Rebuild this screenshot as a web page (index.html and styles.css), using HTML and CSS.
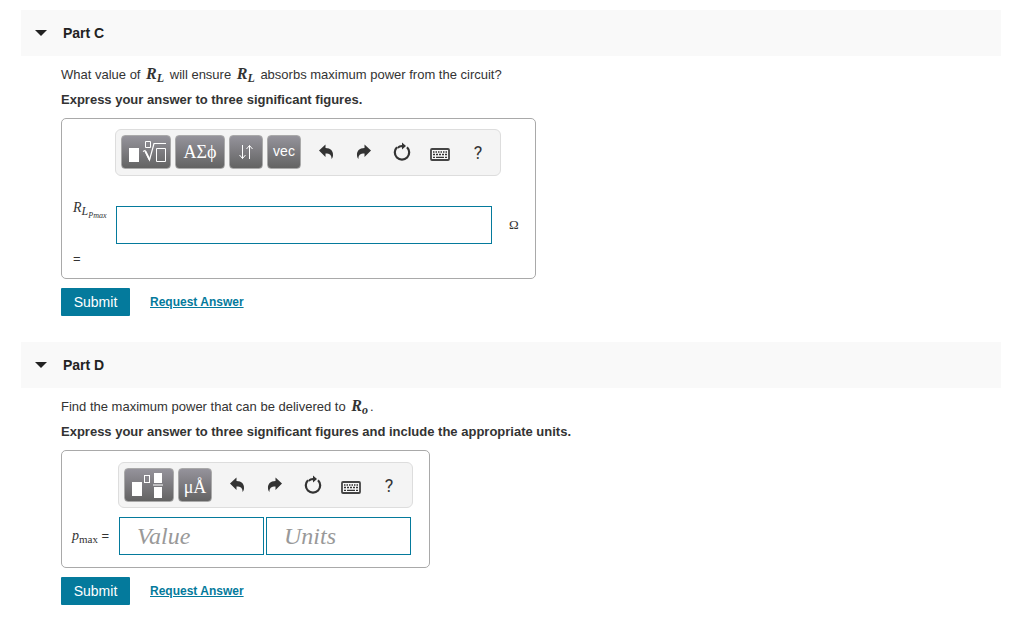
FILE: index.html
```html
<!DOCTYPE html>
<html lang="en">
<head>
  <meta charset="UTF-8" />
  <meta name="viewport" content="width=device-width, initial-scale=1.0" />
  <title>Maximum Power Transfer</title>
  <link rel="stylesheet" href="styles.css">
</head>
<body>
  <!-- Icons shared by both toolbars -->
  <svg class="sprite" aria-hidden="true">
    <symbol id="undo" viewBox="0 0 16 16">
      <path d="M1 6.500 7.500.5v3.500c5.200.2 7.900 2.900 7.500 7.500-.1 1.500-.6 2.700-1.500 3.500.2-3.700-1.500-5.500-6-5.500V13z" fill="#333"/>
    </symbol>
    <symbol id="reset" viewBox="0 0 20 20">
      <path d="M5 5.200A7.200 7.200 0 1 0 15 5.200" fill="none" stroke="#333" stroke-width="2.200"/>
      <path d="M5 5.500C6.500 3.800 8 3.200 10 3.100V.5l4 3.500-4 3.600V5.200C8.300 5.300 7.500 5.600 6.500 6.500z" fill="#333"/>
    </symbol>
    <symbol id="keyboard" viewBox="0 0 20 13">
      <rect x="1" y="1" width="18" height="11" rx="1" fill="#f8f8f8" stroke="#444" stroke-width="1.800"/>
      <path d="M3 4h14" stroke="#333" stroke-width="1.500" stroke-dasharray="1.500 1"/>
      <path d="M3 6.500h14" stroke="#333" stroke-width="1.500" stroke-dasharray="2 1"/>
      <path d="M3 9.300h2M6 9.300h8M15 9.300h2" stroke="#333" stroke-width="1.200"/>
    </symbol>
  </svg>

  <main>
    <section class="part">
      <h2 class="part-header"><span class="arrow"></span>Part C</h2>
      <div class="part-body">
        <p>What value of <span class="math"><i>R<sub>L</sub></i></span> will ensure <span class="math"><i>R<sub>L</sub></i></span> absorbs maximum power from the circuit?</p>
        <p class="instructions">Express your answer to three significant figures.</p>
        <div class="answer-box">
          <div class="toolbar">
            <div class="templates">
              <button type="button" class="wide" aria-label="Templates">
                <svg width="40" height="24" viewBox="0 0 40 24">
                  <rect x="3" y="8" width="10" height="14" fill="#fff"/>
                  <path d="M19.500 1.500h5v6h-5zM30.500 8.500h9v13h-9z" fill="none" stroke="#fff"/>
                  <path d="M17 11.500l2-1 4.500 9.500 4.500-16.500H40" fill="none" stroke="#fff" stroke-width="1.200"/>
                  <path d="M19.500 11.500l4 8" stroke="#fff" stroke-width="1.800"/>
                </svg>
              </button>
              <button type="button" class="wide greek">ΑΣϕ</button>
              <button type="button" aria-label="Arrows">
                <svg width="16" height="18" viewBox="0 0 16 18" fill="none" stroke="#fff">
                  <path d="M4.500 2v13.500M1.500 12l3 3.500 3-3.500M11.500 16V2.500M8.500 6l3-3.500 3 3.500"/>
                </svg>
              </button>
              <button type="button" class="vec">vec</button>
            </div>
            <div class="tools">
              <button type="button" aria-label="Undo"><svg width="16" height="16"><use href="#undo"/></svg></button>
              <button type="button" aria-label="Redo"><svg class="flip" width="16" height="16"><use href="#undo"/></svg></button>
              <button type="button" aria-label="Reset"><svg width="20" height="20"><use href="#reset"/></svg></button>
              <button type="button" aria-label="Keyboard shortcuts"><svg class="low" width="20" height="13"><use href="#keyboard"/></svg></button>
              <button type="button" aria-label="Help">?</button>
            </div>
          </div>
          <div class="answer-row">
            <label class="stacked" for="rl"><i>R<sub>L<sub>Pmax</sub></sub></i> <span>=</span></label>
            <div class="field">
              <input type="text" id="rl" class="long">
              <span class="unit">Ω</span>
            </div>
          </div>
        </div>
        <div class="actions">
          <button type="submit" class="submit">Submit</button>
          <a href="#">Request Answer</a>
        </div>
      </div>
    </section>

    <section class="part">
      <h2 class="part-header"><span class="arrow"></span>Part D</h2>
      <div class="part-body">
        <p>Find the maximum power that can be delivered to <span class="math"><i>R<sub>o</sub></i></span>.</p>
        <p class="instructions">Express your answer to three significant figures and include the appropriate units.</p>
        <div class="answer-box compact">
          <div class="toolbar">
            <div class="templates">
              <button type="button" class="wide" aria-label="Templates">
                <svg width="40" height="28" viewBox="0 0 40 28">
                  <rect x="3" y="11" width="10" height="14" fill="#fff"/>
                  <rect x="15.500" y="4.500" width="5" height="7" fill="none" stroke="#fff"/>
                  <path d="M25 2h8v10h-8zM25 16h8v11h-8zM24 13.500h10v1H24z" fill="#fff"/>
                </svg>
              </button>
              <button type="button" class="greek angstrom">μÅ</button>
            </div>
            <div class="tools">
              <button type="button" aria-label="Undo"><svg width="16" height="16"><use href="#undo"/></svg></button>
              <button type="button" aria-label="Redo"><svg class="flip" width="16" height="16"><use href="#undo"/></svg></button>
              <button type="button" aria-label="Reset"><svg width="20" height="20"><use href="#reset"/></svg></button>
              <button type="button" aria-label="Keyboard shortcuts"><svg class="low" width="20" height="13"><use href="#keyboard"/></svg></button>
              <button type="button" aria-label="Help">?</button>
            </div>
          </div>
          <div class="answer-row">
            <label for="value"><i>p</i><sub>max</sub> <span>=</span></label>
            <input type="text" id="value" placeholder="Value">
            <input type="text" id="units" placeholder="Units" aria-label="Units">
          </div>
        </div>
        <div class="actions">
          <button type="submit" class="submit">Submit</button>
          <a href="#">Request Answer</a>
        </div>
      </div>
    </section>
  </main>
</body>
</html>
```
FILE: styles.css
```css
* {
  box-sizing: border-box;
}
body {
  font-family: "Liberation Sans", Arial, sans-serif;
  font-size: 13px;
  line-height: 18px;
  color: #333;
  background: #fff;
  margin: 0;
}
main {
  padding: 10px 10px 0 21px;
}
.sprite {
  display: none;
}
.part {
  margin-bottom: 26px;
}
.part-header {
  display: flex;
  align-items: center;
  height: 46px;
  margin: 0;
  padding-left: 14px;
  background: #f9f9f9;
  color: #222;
  font-size: 14px;
}
.arrow {
  border: 6px solid transparent;
  border-top-color: #222;
  border-bottom: 0;
  margin-right: 16px;
}
.part-body {
  padding: 9px 0 0 40px;
}
p {
  margin: 0 0 7px;
}
.instructions {
  font-weight: bold;
  margin-bottom: 9px;
}
.math {
  font-family: "Liberation Serif", "Times New Roman", serif;
  font-size: 16px;
  font-weight: bold;
  line-height: 18px;
  margin: 0 2px;
}
sub {
  font-size: 12px;
  line-height: 0;
  vertical-align: -3px;
}
.answer-box {
  width: fit-content;
  min-height: 161px;
  padding: 10px 16px 0 11px;
  border: 1px solid #a9a9a9;
  border-radius: 5px;
}
.answer-box.compact {
  min-height: 118px;
  padding: 11px 16px 0 10px;
}
.toolbar {
  display: flex;
  gap: 6px;
  width: fit-content;
  margin-left: 42px;
  padding: 5px 3px 6px 5px;
  border: 1px solid #ddd;
  border-radius: 6px;
  background: #f4f4f4;
}
.compact .toolbar {
  margin-left: 46px;
  padding: 5px 4px 5px 5px;
}
.templates {
  display: flex;
  gap: 4px;
}
.tools {
  display: flex;
}
.toolbar button {
  display: flex;
  align-items: center;
  justify-content: center;
  height: 34px;
  padding: 0;
  border: 0;
}
.templates button {
  width: 34px;
  border: 1px solid #aaa;
  border-radius: 4px;
  background: linear-gradient(#95939b, #636363);
  color: #fff;
}
.templates .wide {
  width: 50px;
}
.templates .greek {
  font-family: "Liberation Serif", "Times New Roman", serif;
  font-size: 18px;
}
.templates .angstrom {
  padding-top: 4px;
}
.templates .vec {
  padding-bottom: 2px;
  font-family: "Liberation Sans", Arial, sans-serif;
  font-size: 14px;
}
.tools button {
  width: 38px;
  background: none;
  color: #333;
  font-family: Roboto, sans-serif;
  font-size: 18px;
}
.flip {
  transform: scaleX(-1);
}
.low {
  margin-top: 4px;
}
.answer-row {
  display: flex;
  align-items: center;
  margin-top: 23px;
}
.compact .answer-row {
  gap: 2px;
  margin-top: 9px;
}
label {
  width: 45px;
  font-family: "Liberation Serif", "Times New Roman", serif;
  font-size: 14px;
}
label sub {
  font-size: 11px;
}
label span {
  font-family: "Liberation Sans", Arial, sans-serif;
  font-size: 13px;
}
.stacked {
  width: 43px;
}
.stacked sub {
  font-size: 12px;
}
.stacked sub sub {
  font-size: 8px;
}
.stacked span {
  display: block;
  margin-top: 33px;
}
.field {
  display: flex;
  align-items: center;
  align-self: flex-start;
  margin-top: 7px;
}
.answer-row input {
  width: 145px;
  height: 38px;
  padding: 0 17px;
  border: 1px solid #047a9c;
  font-family: "Liberation Serif", "Times New Roman", serif;
  font-size: 24px;
}
.answer-row .long {
  width: 376px;
}
input::placeholder {
  color: #999;
  font-style: italic;
}
.unit {
  width: 27px;
  padding-left: 17px;
  font-family: "Liberation Serif", "Times New Roman", serif;
}
.actions {
  display: flex;
  align-items: center;
  gap: 20px;
  margin-top: 9px;
}
.submit {
  min-width: 69px;
  height: 28px;
  padding: 0 12px;
  border: 0;
  border-radius: 1px;
  background: #047a9c;
  color: #fff;
  font-family: "Liberation Sans", Arial, sans-serif;
  font-size: 14px;
}
a {
  color: #047a9c;
  font-size: 12px;
  font-weight: bold;
}
```
